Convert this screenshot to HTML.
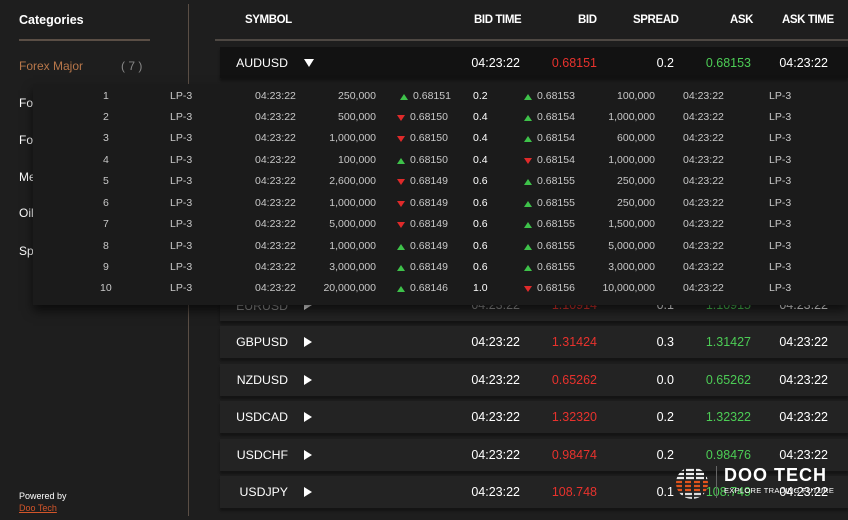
<!DOCTYPE html>
<html><head><meta charset="utf-8"><style>
*{margin:0;padding:0;box-sizing:border-box}
body{width:848px;height:520px;background:#1e1e1e;font-family:"Liberation Sans",sans-serif;color:#fff;position:relative;overflow:hidden}
.a{position:absolute;white-space:nowrap}
.hd{font-size:11.5px;font-weight:bold;letter-spacing:-0.4px;top:14px}
.row{position:absolute;left:220px;width:628px;height:32px;background:#232323;box-shadow:0 3px 2px #141414}
.row span{position:absolute;top:9px;font-size:12.5px}
.sym{left:0;width:68px;text-align:right;font-size:12.3px!important}
.tri{left:84px;top:11px!important;width:0;height:0;border-top:5px solid transparent;border-bottom:5px solid transparent;border-left:8px solid #fff}
.r{text-align:right}
.red{color:#e8322d}.grn{color:#4ccc55}
.dd{position:absolute;left:33px;top:84px;width:815px;height:221px;background:#1b1b1b;box-shadow:0 6px 10px rgba(0,0,0,.6)}
.dr{position:absolute;left:0;width:815px;height:21px;font-size:10.5px;color:#c8c8c8}
.dr span{position:absolute;top:4px}
.up{display:inline-block;width:0;height:0;border-left:4px solid transparent;border-right:4px solid transparent;border-bottom:6px solid #3ec24a;position:absolute;top:8px!important}
.dn{display:inline-block;width:0;height:0;border-left:4px solid transparent;border-right:4px solid transparent;border-top:6px solid #e02a2a;position:absolute;top:8px!important}
</style></head><body>
<div class="a" style="left:19px;top:13px;font-size:12.5px;font-weight:bold">Categories</div>
<div class="a" style="left:19px;top:39px;width:131px;height:2px;background:#5a4e45"></div>
<div class="a" style="left:19px;top:59px;font-size:12px;color:#b8774a">Forex Major</div>
<div class="a" style="left:121px;top:59px;font-size:12px;color:#888">( 7 )</div>
<div class="a" style="left:19px;top:96px;font-size:12px">Forex Minor</div>
<div class="a" style="left:19px;top:133px;font-size:12px">Forex Exotic</div>
<div class="a" style="left:19px;top:170px;font-size:12px">Metals</div>
<div class="a" style="left:19px;top:206px;font-size:12px">Oil</div>
<div class="a" style="left:19px;top:244px;font-size:12px">Spot</div>
<div class="a" style="left:19px;top:491px;font-size:9px">Powered by</div>
<div class="a" style="left:19px;top:503px;font-size:9px;color:#d2552a;text-decoration:underline">Doo Tech</div>
<div class="a" style="left:188px;top:4px;width:1px;height:512px;background:#5a4e45"></div>

<div class="a hd" style="left:245px">SYMBOL</div>
<div class="a hd" style="left:474px">BID TIME</div>
<div class="a hd" style="left:578px">BID</div>
<div class="a hd" style="left:633px">SPREAD</div>
<div class="a hd" style="left:730px">ASK</div>
<div class="a hd" style="left:782px">ASK TIME</div>
<div class="a" style="left:215px;top:39px;width:633px;height:2px;background:#4e4843"></div>

<div class="row" style="top:47px;background:#121212;height:31px"><span class="sym">AUDUSD</span><span class="tri" style="border:none;border-left:5px solid transparent;border-right:5px solid transparent;border-top:8px solid #fff;top:12px!important"></span>
<span class="r" style="right:328px">04:23:22</span><span class="r red" style="right:251px">0.68151</span><span class="r" style="right:174px">0.2</span><span class="r grn" style="right:97px">0.68153</span><span class="r" style="right:20px">04:23:22</span></div>

<div class="row" style="top:289px"><span class="sym" style="top:10px;color:#999">EURUSD</span><span class="tri"></span><span class="r" style="right:328px;color:#999">04:23:22</span><span class="r red" style="right:251px">1.10914</span><span class="r" style="right:174px">0.1</span><span class="r grn" style="right:97px">1.10915</span><span class="r" style="right:20px">04:23:22</span></div>
<div class="row" style="top:326px"><span class="sym">GBPUSD</span><span class="tri"></span><span class="r" style="right:328px">04:23:22</span><span class="r red" style="right:251px">1.31424</span><span class="r" style="right:174px">0.3</span><span class="r grn" style="right:97px">1.31427</span><span class="r" style="right:20px">04:23:22</span></div>
<div class="row" style="top:364px"><span class="sym">NZDUSD</span><span class="tri"></span><span class="r" style="right:328px">04:23:22</span><span class="r red" style="right:251px">0.65262</span><span class="r" style="right:174px">0.0</span><span class="r grn" style="right:97px">0.65262</span><span class="r" style="right:20px">04:23:22</span></div>
<div class="row" style="top:401px"><span class="sym">USDCAD</span><span class="tri"></span><span class="r" style="right:328px">04:23:22</span><span class="r red" style="right:251px">1.32320</span><span class="r" style="right:174px">0.2</span><span class="r grn" style="right:97px">1.32322</span><span class="r" style="right:20px">04:23:22</span></div>
<div class="row" style="top:439px"><span class="sym">USDCHF</span><span class="tri"></span><span class="r" style="right:328px">04:23:22</span><span class="r red" style="right:251px">0.98474</span><span class="r" style="right:174px">0.2</span><span class="r grn" style="right:97px">0.98476</span><span class="r" style="right:20px">04:23:22</span></div>
<div class="row" style="top:476px"><span class="sym">USDJPY</span><span class="tri"></span><span class="r" style="right:328px">04:23:22</span><span class="r red" style="right:251px">108.748</span><span class="r" style="right:174px">0.1</span><span class="r grn" style="right:97px">108.749</span><span class="r" style="right:20px">04:23:22</span></div>

<div class="dd">
<div class="dr" style="top:2px"><span style="left:70px">1</span><span style="left:137px">LP-3</span><span style="left:222px">04:23:22</span><span class="r" style="right:472px">250,000</span><span class="up" style="left:367px"></span><span style="left:380px">0.68151</span><span style="left:440px;color:#fff">0.2</span><span class="up" style="left:491px"></span><span style="left:504px">0.68153</span><span class="r" style="right:193px">100,000</span><span style="left:650px">04:23:22</span><span style="left:736px">LP-3</span></div>
<div class="dr" style="top:23px"><span style="left:70px">2</span><span style="left:137px">LP-3</span><span style="left:222px">04:23:22</span><span class="r" style="right:472px">500,000</span><span class="dn" style="left:364px"></span><span style="left:377px">0.68150</span><span style="left:440px;color:#fff">0.4</span><span class="up" style="left:491px"></span><span style="left:504px">0.68154</span><span class="r" style="right:193px">1,000,000</span><span style="left:650px">04:23:22</span><span style="left:736px">LP-3</span></div>
<div class="dr" style="top:44px"><span style="left:70px">3</span><span style="left:137px">LP-3</span><span style="left:222px">04:23:22</span><span class="r" style="right:472px">1,000,000</span><span class="dn" style="left:364px"></span><span style="left:377px">0.68150</span><span style="left:440px;color:#fff">0.4</span><span class="up" style="left:491px"></span><span style="left:504px">0.68154</span><span class="r" style="right:193px">600,000</span><span style="left:650px">04:23:22</span><span style="left:736px">LP-3</span></div>
<div class="dr" style="top:66px"><span style="left:70px">4</span><span style="left:137px">LP-3</span><span style="left:222px">04:23:22</span><span class="r" style="right:472px">100,000</span><span class="up" style="left:364px"></span><span style="left:377px">0.68150</span><span style="left:440px;color:#fff">0.4</span><span class="dn" style="left:491px"></span><span style="left:504px">0.68154</span><span class="r" style="right:193px">1,000,000</span><span style="left:650px">04:23:22</span><span style="left:736px">LP-3</span></div>
<div class="dr" style="top:87px"><span style="left:70px">5</span><span style="left:137px">LP-3</span><span style="left:222px">04:23:22</span><span class="r" style="right:472px">2,600,000</span><span class="dn" style="left:364px"></span><span style="left:377px">0.68149</span><span style="left:440px;color:#fff">0.6</span><span class="up" style="left:491px"></span><span style="left:504px">0.68155</span><span class="r" style="right:193px">250,000</span><span style="left:650px">04:23:22</span><span style="left:736px">LP-3</span></div>
<div class="dr" style="top:109px"><span style="left:70px">6</span><span style="left:137px">LP-3</span><span style="left:222px">04:23:22</span><span class="r" style="right:472px">1,000,000</span><span class="dn" style="left:364px"></span><span style="left:377px">0.68149</span><span style="left:440px;color:#fff">0.6</span><span class="up" style="left:491px"></span><span style="left:504px">0.68155</span><span class="r" style="right:193px">250,000</span><span style="left:650px">04:23:22</span><span style="left:736px">LP-3</span></div>
<div class="dr" style="top:130px"><span style="left:70px">7</span><span style="left:137px">LP-3</span><span style="left:222px">04:23:22</span><span class="r" style="right:472px">5,000,000</span><span class="dn" style="left:364px"></span><span style="left:377px">0.68149</span><span style="left:440px;color:#fff">0.6</span><span class="up" style="left:491px"></span><span style="left:504px">0.68155</span><span class="r" style="right:193px">1,500,000</span><span style="left:650px">04:23:22</span><span style="left:736px">LP-3</span></div>
<div class="dr" style="top:152px"><span style="left:70px">8</span><span style="left:137px">LP-3</span><span style="left:222px">04:23:22</span><span class="r" style="right:472px">1,000,000</span><span class="up" style="left:364px"></span><span style="left:377px">0.68149</span><span style="left:440px;color:#fff">0.6</span><span class="up" style="left:491px"></span><span style="left:504px">0.68155</span><span class="r" style="right:193px">5,000,000</span><span style="left:650px">04:23:22</span><span style="left:736px">LP-3</span></div>
<div class="dr" style="top:173px"><span style="left:70px">9</span><span style="left:137px">LP-3</span><span style="left:222px">04:23:22</span><span class="r" style="right:472px">3,000,000</span><span class="up" style="left:364px"></span><span style="left:377px">0.68149</span><span style="left:440px;color:#fff">0.6</span><span class="up" style="left:491px"></span><span style="left:504px">0.68155</span><span class="r" style="right:193px">3,000,000</span><span style="left:650px">04:23:22</span><span style="left:736px">LP-3</span></div>
<div class="dr" style="top:194px"><span style="left:67px">10</span><span style="left:137px">LP-3</span><span style="left:222px">04:23:22</span><span class="r" style="right:472px">20,000,000</span><span class="up" style="left:364px"></span><span style="left:377px">0.68146</span><span style="left:440px;color:#fff">1.0</span><span class="dn" style="left:491px"></span><span style="left:504px">0.68156</span><span class="r" style="right:193px">10,000,000</span><span style="left:650px">04:23:22</span><span style="left:736px">LP-3</span></div>
</div>

<svg class="a" style="left:674px;top:465px" width="36" height="36" viewBox="0 0 36 36">
<defs><clipPath id="c"><circle cx="18" cy="18" r="16"/></clipPath></defs>
<g clip-path="url(#c)" stroke-width="2.2" fill="none">
<path d="M2 5h32M2 9h32M2 13h32" stroke="#eee" stroke-dasharray="8 2"/>
<path d="M2 17h32M2 21h32M2 25h32" stroke="#e2541d" stroke-dasharray="6 3"/>
<path d="M2 29h32M2 33h32" stroke="#ddd" stroke-dasharray="7 2"/>
</g></svg>
<div class="a" style="left:716px;top:466px;width:1px;height:32px;background:#666"></div>
<div class="a" style="left:724px;top:465px;font-size:18px;font-weight:bold;letter-spacing:1px">DOO TECH</div>
<div class="a" style="left:724px;top:486px;font-size:7.5px;letter-spacing:0.3px">EXPLORE TRADING FUTURE</div>
</body></html>
